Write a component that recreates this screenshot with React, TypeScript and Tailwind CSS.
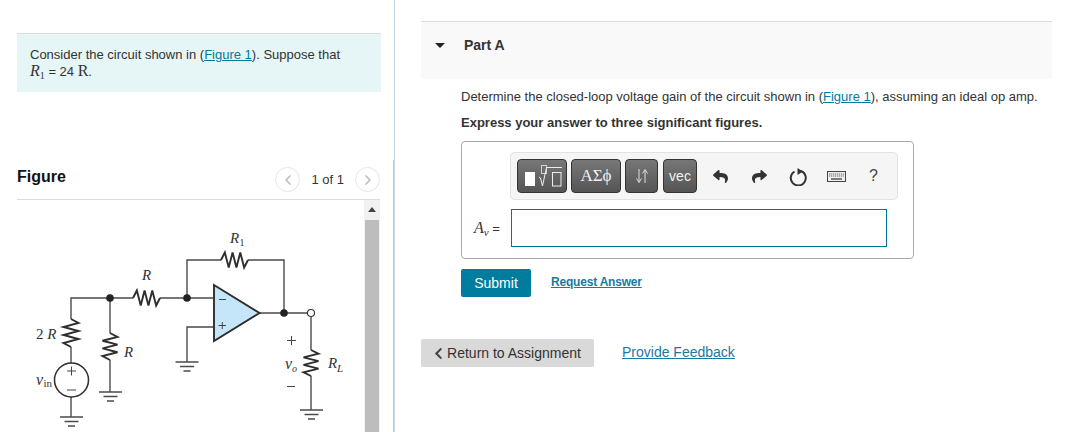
import { ChevronLeft, ChevronRight } from 'lucide-react';
import { FaChevronLeft, FaReply, FaShare } from 'react-icons/fa';

const wire = '#4a4a4a';

function zigH(x1: number, x2: number, y: number) {
  const step = (x2 - x1) / 7;
  const pts = [`${x1},${y}`];
  [-1, 1, -1, 1, -1, 1].forEach((s, i) => {
    pts.push(`${x1 + step * (i + 1)},${y + s * 7.5}`);
  });
  pts.push(`${x2},${y}`);
  return pts.join(' ');
}

function zigV(x: number, y1: number, y2: number) {
  const step = (y2 - y1) / 7;
  const pts = [`${x},${y1}`];
  [1, -1, 1, -1, 1, -1].forEach((s, i) => {
    pts.push(`${x + s * 7.5},${y1 + step * (i + 1)}`);
  });
  pts.push(`${x},${y2}`);
  return pts.join(' ');
}

function Ground({ x, y }: { x: number; y: number }) {
  return (
    <g stroke={wire} strokeWidth="1.5">
      <line x1={x - 11.5} y1={y} x2={x + 11.5} y2={y} />
      <line x1={x - 7} y1={y + 4.5} x2={x + 7} y2={y + 4.5} />
      <line x1={x - 3.5} y1={y + 9} x2={x + 3.5} y2={y + 9} />
    </g>
  );
}

function Circuit() {
  const serif = { fontFamily: '"Liberation Serif", serif', fontSize: 15, fill: '#333' };
  const italic = { ...serif, fontStyle: 'italic' as const };
  return (
    <svg width="347" height="232" viewBox="17 200 347 232" className="block">
      <g fill="none" stroke={wire} strokeWidth="1.4">
        <polyline points="71,319 71,298 133,298" />
        <polyline points="160,298 214,298" />
        <polyline points="187,298 187,260 221,260" />
        <polyline points="248,260 284,260 284,313" />
        <polyline points="260,313 308,313" />
        <polyline points="311,317 311,350" />
        <polyline points="311,376 311,410" />
        <polyline points="214,327 187,327 187,362" />
        <polyline points="71,347 71,363" />
        <polyline points="71,397 71,417" />
        <polyline points="110,298 110,333" />
        <polyline points="110,360 110,392" />
      </g>
      <g fill="none" stroke="#2e2e2e" strokeWidth="1.9">
        <polyline points={zigH(133, 160, 298)} />
        <polyline points={zigH(221, 248, 260)} />
        <polyline points={zigV(71, 319, 347)} />
        <polyline points={zigV(110, 333, 360)} />
        <polyline points={zigV(311, 350, 376)} />
      </g>
      <polygon points="214,285 259.5,313 214,341" fill="#c5e6f8" stroke="#2e2e2e" strokeWidth="1.9" />
      <g stroke="#444" strokeWidth="1">
        <line x1="219" y1="299.5" x2="226" y2="299.5" />
        <line x1="218.5" y1="325.5" x2="226" y2="325.5" />
        <line x1="222.3" y1="322" x2="222.3" y2="329" />
        <line x1="287" y1="340.5" x2="296" y2="340.5" />
        <line x1="291.5" y1="336" x2="291.5" y2="345" />
        <line x1="287" y1="386.5" x2="295" y2="386.5" />
        <line x1="67" y1="371" x2="76" y2="371" />
        <line x1="71.5" y1="366.5" x2="71.5" y2="375.5" />
        <line x1="67" y1="390" x2="76" y2="390" />
      </g>
      <circle cx="71.5" cy="380" r="17" fill="none" stroke="#2e2e2e" strokeWidth="1.5" />
      <circle cx="110" cy="298" r="3.8" fill="#222" />
      <circle cx="187" cy="298" r="3.8" fill="#222" />
      <circle cx="284" cy="313" r="3.8" fill="#222" />
      <circle cx="311" cy="313" r="3.5" fill="#fff" stroke="#333" strokeWidth="1.1" />
      <Ground x={187} y={362} />
      <Ground x={71.5} y={417} />
      <Ground x={110.5} y={392} />
      <Ground x={311.5} y={410} />
      <text x="230" y="243" {...italic}>R</text>
      <text x="239.5" y="246" {...serif} fontSize="10">1</text>
      <text x="142" y="280" {...italic}>R</text>
      <text x="124" y="357" {...italic}>R</text>
      <text x="36" y="339" {...serif}>2 <tspan fontStyle="italic">R</tspan></text>
      <text x="36" y="385" {...italic} fontSize="16">v</text>
      <text x="43.5" y="387" {...serif} fontSize="11">in</text>
      <text x="285" y="369" {...italic} fontSize="16">v</text>
      <text x="292" y="372" {...italic} fontSize="10">o</text>
      <text x="328" y="368" {...italic}>R</text>
      <text x="337" y="372" {...italic} fontSize="11">L</text>
    </svg>
  );
}

function MathBtn({ className, children }: { className: string; children: React.ReactNode }) {
  return (
    <div
      className={`h-[34px] flex items-center justify-center rounded-[4px] border border-[#333] bg-gradient-to-b from-[#777] to-[#555] text-[#f2f2f2] ${className}`}
    >
      {children}
    </div>
  );
}

function Toolbar() {
  return (
    <div className="ml-[48px] w-[388px] h-[48px] flex items-center pl-[6px] rounded-[5px] border border-[#e2e2e2] bg-[#f5f5f5]">
      <MathBtn className="w-[50px]">
        <svg width="40" height="30" viewBox="0 0 40 30" fill="none">
          <rect x="3" y="11" width="10" height="14" fill="#fff" />
          <rect x="19.5" y="4.5" width="5" height="8" stroke="#ddd" strokeWidth="0.9" />
          <path d="M17 16l1.5 1 2 8L24.5 6.5H40" stroke="#eee" strokeWidth="1" />
          <rect x="30.5" y="11.5" width="8.5" height="13.5" stroke="#eee" strokeWidth="1" />
        </svg>
      </MathBtn>
      <MathBtn className="w-[50px] ml-[4px] font-['Liberation_Serif',serif] text-[17px]">ΑΣϕ</MathBtn>
      <MathBtn className="w-[33px] ml-[4px]">
        <svg width="16" height="18" viewBox="0 0 16 18" fill="none" stroke="#ddd" strokeWidth="1">
          <path d="M5 2v13M2.5 11.5L5 15.5 7.5 11.5" />
          <path d="M11 16V3M8.5 6.5L11 2.5l2.5 4" />
        </svg>
      </MathBtn>
      <MathBtn className="w-[34px] ml-[5px] text-[14px]">vec</MathBtn>
      <FaReply className="ml-[16px] text-[#333]" size={15} />
      <FaShare className="ml-[24px] text-[#333]" size={15} />
      <svg width="18" height="20" viewBox="0 0 18 20" fill="none" className="ml-[22px]">
        <path d="M5.5 5.5A7.5 7.5 0 1 0 12 5" stroke="#333" strokeWidth="2" />
        <path d="M8.5 2L14 5.5 8.5 9z" fill="#333" />
      </svg>
      <svg width="19" height="11" viewBox="0 0 19 11" className="ml-[20px]">
        <rect x="0.5" y="0.5" width="18" height="10" fill="#f0f0f0" stroke="#444" />
        <path d="M2 3h15M2 5h15" stroke="#666" strokeWidth="1.2" strokeDasharray="1.3 0.7" />
        <path d="M4 8h11" stroke="#555" strokeWidth="1.5" />
      </svg>
      <span className="ml-[23px] text-[16px] text-[#444]">?</span>
    </div>
  );
}

export default function App() {
  return (
    <div className="flex h-[432px] w-[1072px] overflow-hidden bg-white font-['Liberation_Sans',Arial,sans-serif] text-[#333]">
      <div className="relative w-[395px] shrink-0 border-r border-[#c3d6e6] pt-[33px] pl-[17px]">
        <div className="absolute right-0 top-[160px] bottom-0 w-[1px] bg-[#b5cfe2]" />
        <div className="h-[59px] w-[364px] border-t border-[#dcdcdc] bg-[#e6f5f6] pl-[13px] pt-[13px] text-[13px] leading-[16px]">
          <p>
            Consider the circuit shown in (<a className="text-[#007c9e] underline">Figure 1</a>). Suppose that
          </p>
          <p>
            <span className="font-['Liberation_Serif',serif] italic text-[16px]">
              R<sub className="not-italic text-[10px]">1</sub>
            </span>{' '}
            = 24 <span className="font-['Liberation_Serif',serif] text-[16px]">R</span>.
          </p>
        </div>
        <div className="mt-[71px] flex h-[37px] w-[363px] items-start justify-between border-b border-[#dcdcdc]">
          <h2 className="pt-[2px] text-[16px] font-bold leading-[24px] text-[#111]">Figure</h2>
          <div className="flex items-center pt-[4px] text-[13px]">
            <span className="flex h-[25px] w-[25px] items-center justify-center rounded-full border border-[#e6e6e6] text-[#bbb]">
              <ChevronLeft size={16} strokeWidth={2.5} />
            </span>
            <span className="mx-[11px]">1 of 1</span>
            <span className="flex h-[25px] w-[25px] items-center justify-center rounded-full border border-[#e6e6e6] text-[#bbb]">
              <ChevronRight size={16} strokeWidth={2.5} />
            </span>
          </div>
        </div>
        <div className="flex w-[363px]">
          <Circuit />
          <div className="flex h-[232px] w-[16px] flex-col items-center bg-[#f1f1f1] px-[1px]">
            <div className="mt-[7px] h-0 w-0 border-x-[4px] border-b-[5px] border-x-transparent border-b-[#444]" />
            <div className="mt-[8px] w-full flex-1 bg-[#bdbdbd]" />
          </div>
        </div>
      </div>

      <div className="flex-1 pt-[21px] pl-[26px] pr-[20px]">
        <div className="flex h-[58px] items-start border-t border-[#dcdcdc] bg-[#f9f9f9] pt-[15px]">
          <div className="ml-[14px] mt-[6px] h-0 w-0 border-x-[5px] border-t-[5px] border-x-transparent border-t-[#222]" />
          <h3 className="ml-[19px] text-[14px] font-bold leading-[16px]">Part A</h3>
        </div>
        <div className="pl-[40px]">
          <p className="mt-[9px] text-[13px] leading-[18px]">
            Determine the closed-loop voltage gain of the circuit shown in (
            <a className="text-[#007c9e] underline">Figure 1</a>), assuming an ideal op amp.
          </p>
          <p className="mt-[8px] text-[13px] font-bold leading-[18px]">Express your answer to three significant figures.</p>
          <div className="mt-[9px] h-[118px] w-[453px] rounded-[4px] border border-[#aaa] pt-[10px]">
            <Toolbar />
            <div className="mt-[9px] flex items-center">
              <span className="ml-[12px] w-[37px] text-[13px] leading-none">
                <span className="font-['Liberation_Serif',serif] italic text-[16px]">
                  A<sub className="text-[11px]">v</sub>
                </span>{' '}
                =
              </span>
              <div className="h-[38px] w-[376px] border border-[#00759a] bg-white" />
            </div>
          </div>
          <div className="mt-[10px] flex items-start">
            <button className="h-[28px] w-[70px] rounded-[2px] bg-[#007c9e] text-[14px] text-white">Submit</button>
            <a className="ml-[20px] mt-[4px] text-[12px] font-bold leading-[18px] tracking-[-0.2px] text-[#1a7a9c] underline">
              Request Answer
            </a>
          </div>
        </div>
        <div className="mt-[42px] flex items-start">
          <button className="flex h-[28px] w-[173px] items-center justify-center gap-[2px] rounded-[2px] bg-[#d9d9d9] pr-[2px] text-[14px]">
            <FaChevronLeft size={13} className="text-[#444]" />
            Return to Assignment
          </button>
          <a className="ml-[28px] mt-[4px] text-[14px] leading-[18px] text-[#1a7a9c] underline">Provide Feedback</a>
        </div>
      </div>
    </div>
  );
}
